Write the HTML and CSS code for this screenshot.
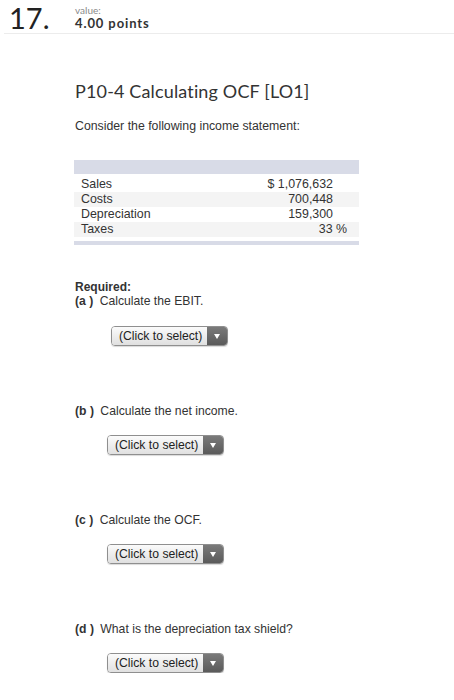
FILE: index.html
```html
<!DOCTYPE html>
<html>
<head>
<meta charset="utf-8">
<link rel="stylesheet" href="styles.css">
</head>
<body>
<div class="page">
  <header class="qhead">
    <div class="qnum">17.</div>
    <div class="qval">
      <div class="vlabel">value:</div>
      <div class="vpoints">4.00 points</div>
    </div>
  </header>
  <main class="content">
    <h1 class="title">P10-4 Calculating OCF [LO1]</h1>
    <p class="intro">Consider the following income statement:</p>
    <div class="statement">
      <div class="bar-top"></div>
      <div class="row first"><span class="lbl">Sales</span><span class="amt">$ 1,076,632</span></div>
      <div class="row shade"><span class="lbl">Costs</span><span class="amt">700,448</span></div>
      <div class="row"><span class="lbl">Depreciation</span><span class="amt">159,300</span></div>
      <div class="row shade"><span class="lbl">Taxes</span><span class="amt pct">33 %</span></div>
      <div class="bar-bottom"></div>
    </div>

    <div class="req">Required:</div>
    <div class="part part-a">
      <p class="q"><b>(a )</b> Calculate the EBIT.</p>
      <div class="sel sel-a"><span class="sel-text">(Click to select)</span><span class="sel-arrow"></span></div>
    </div>
    <div class="part part-b">
      <p class="q"><b>(b )</b> Calculate the net income.</p>
      <div class="sel"><span class="sel-text">(Click to select)</span><span class="sel-arrow"></span></div>
    </div>
    <div class="part part-c">
      <p class="q"><b>(c )</b> Calculate the OCF.</p>
      <div class="sel"><span class="sel-text">(Click to select)</span><span class="sel-arrow"></span></div>
    </div>
    <div class="part part-d">
      <p class="q"><b>(d )</b> What is the depreciation tax shield?</p>
      <div class="sel"><span class="sel-text">(Click to select)</span><span class="sel-arrow"></span></div>
    </div>
  </main>
</div>
</body>
</html>
```

FILE: styles.css
```css
html, body {
  margin: 0;
  padding: 0;
  background: #ffffff;
}
.page {
  width: 454px;
  font-family: "Liberation Sans", Arial, sans-serif;
  color: #333;
}
.qhead {
  display: flex;
  align-items: flex-start;
  margin-left: 4px;
  border-bottom: 1px solid #ececec;
  height: 34px;
  box-sizing: border-box;
}
.qnum {
  font-family: Lato, "Open Sans", sans-serif;
  font-size: 29px;
  line-height: 29px;
  color: #222;
  width: 71px;
  padding-top: 3px;
  padding-left: 5px;
  box-sizing: border-box;
}
.qval {
  padding-top: 5px;
}
.vlabel {
  font-family: Lato, "Open Sans", sans-serif;
  font-size: 10px;
  color: #8a8a8a;
  line-height: 11px;
}
.vpoints {
  font-family: Lato, "Open Sans", sans-serif;
  font-weight: bold;
  font-size: 13px;
  color: #333;
  line-height: 15px;
  letter-spacing: 0.9px;
}
.content {
  padding-left: 75px;
}
.title {
  font-family: Lato, "Open Sans", sans-serif;
  font-variant-ligatures: none;
  font-weight: normal;
  font-size: 18px;
  letter-spacing: 0.15px;
  color: #333;
  margin: 46px 0 0 0;
  line-height: 22px;
}
.intro {
  font-size: 12.3px;
  margin: 17px 0 0 0;
  line-height: 14px;
  color: #333;
}
.statement {
  width: 285px;
  margin-left: -1px;
  margin-top: 27px;
}
.bar-top {
  height: 14px;
  background: #d8dbe7;
}
.row {
  display: flex;
  justify-content: space-between;
  height: 15px;
  line-height: 15px;
  font-size: 12.4px;
  padding-left: 7px;
  padding-right: 26px;
  color: #333;
}
.row.first {
  margin-top: 3px;
}
.row.shade {
  background: #f4f4f4;
}
.amt.pct {
  margin-right: -14px;
}
.bar-bottom {
  height: 4px;
  margin-top: 4px;
  background: #d8dbe7;
}
.req {
  font-weight: bold;
  font-size: 12px;
  margin-top: 35px;
  line-height: 14px;
}
.q {
  font-size: 12.2px;
  margin: 0;
  line-height: 14px;
}
.q b {
  margin-right: 3px;
}
.part-a .q { margin-top: 0; }
.part-b .q, .part-c .q, .part-d .q { margin-top: 58px; }
.sel {
  display: inline-flex;
  align-items: stretch;
  height: 20px;
  border: 1px solid #8f8f8f;
  border-radius: 4px;
  overflow: hidden;
  margin-top: 17px;
  margin-left: 32px;
  box-sizing: border-box;
  box-shadow: 0 1px 1px rgba(0,0,0,0.15);
}
.sel-a {
  margin-top: 18px;
  margin-left: 36px;
}
.sel-text {
  font-size: 12.2px;
  line-height: 18px;
  padding: 0 5px 0 7px;
  color: #222;
  background: linear-gradient(#fbfbfb, #e0e0e0);
}
.sel-arrow {
  width: 20px;
  background: linear-gradient(#7a7a7a, #5a5a5a);
  position: relative;
}
.sel-arrow::after {
  content: "";
  position: absolute;
  left: 6.5px;
  top: 6.5px;
  border-left: 3.5px solid transparent;
  border-right: 3.5px solid transparent;
  border-top: 5px solid #ffffff;
}
```
